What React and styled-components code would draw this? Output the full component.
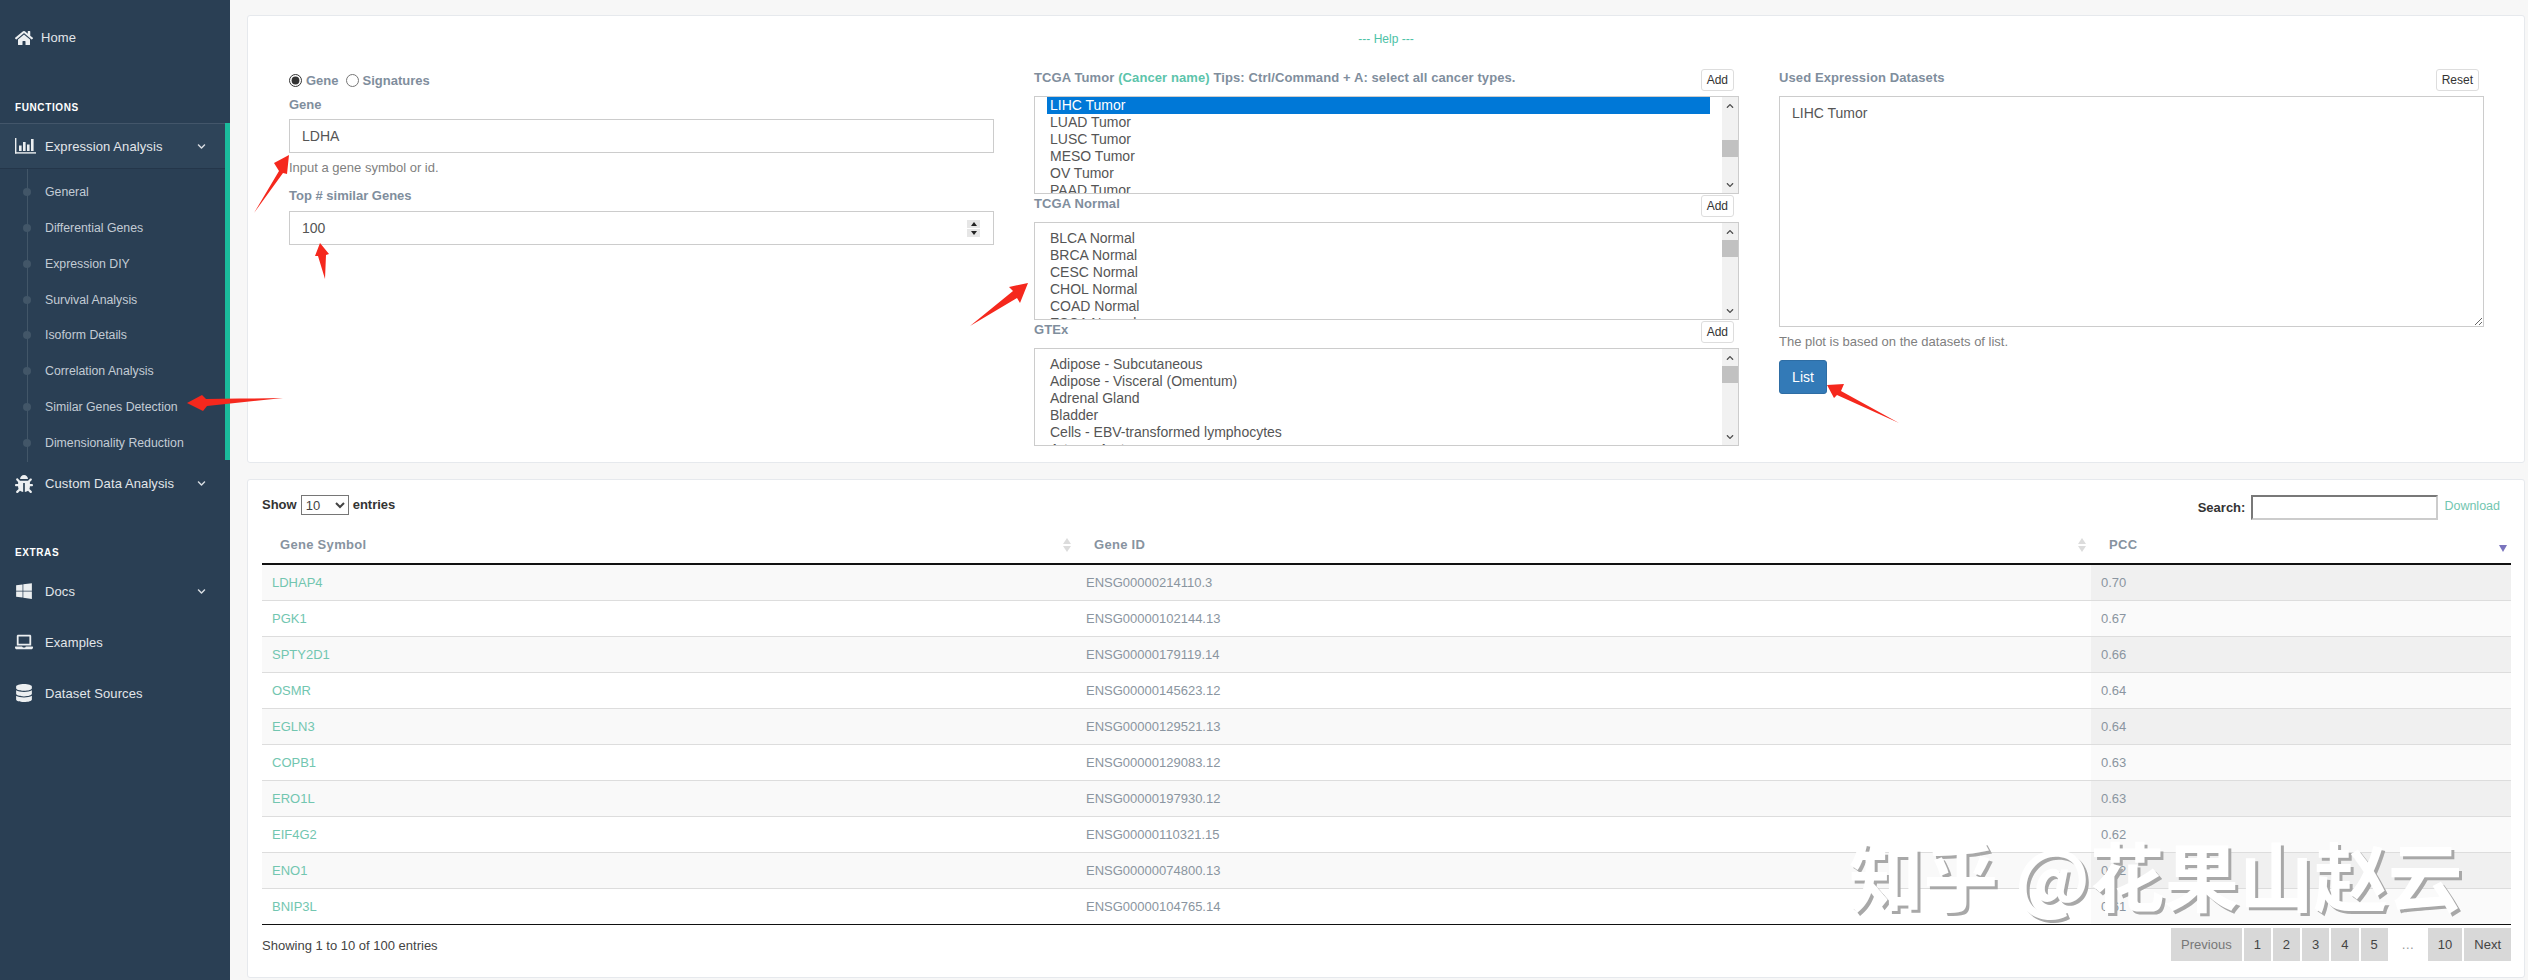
import React from "react";
import styled, { createGlobalStyle } from "styled-components";
import {
  FaHome,
  FaBug,
  FaWindows,
  FaLaptop,
  FaDatabase,
  FaChevronDown,
  FaChevronUp,
} from "react-icons/fa";

const GlobalStyle = createGlobalStyle`
  html, body {
    margin: 0;
    background: #f7f7f7;
    font-family: "Liberation Sans", Arial, sans-serif;
    font-size: 13px;
    color: #7f8e9d;
  }
  * { box-sizing: border-box; }
`;

const Page = styled.div`
  position: relative;
  display: flex;
  width: 2528px;
  height: 980px;
  overflow: hidden;
`;

/* sidebar */
const Sidebar = styled.aside`
  width: 230px;
  flex: none;
  background: #2a3f54;
  padding-top: 15px;
  color: #e7e7e7;
`;

const NavItem = styled.div`
  display: flex;
  align-items: center;
  height: ${(p) => (p.$active ? "46px" : "45px")};
  padding: 0 ${(p) => (p.$active ? "19px" : "24px")} 0 15px;
  font-size: 13px;
  letter-spacing: 0.1px;
  color: #e2e6ea;
  ${(p) =>
    p.$active &&
    `
    background: #2e4459;
    border-top: 1px solid #43566a;
    border-bottom: 1px solid #24364a;
  `}
`;

const NavIcon = styled.span`
  display: flex;
  align-items: center;
  width: ${(p) => (p.$compact ? "26px" : "30px")};
  flex: none;
  font-size: 18px;
  color: #eceff1;
`;

const Caret = styled(FaChevronDown)`
  margin-left: auto;
  font-size: 9px;
  color: #d8dde2;
`;

const SectionTitle = styled.h3`
  margin: ${(p) => p.$top}px 0 ${(p) => p.$bottom}px;
  padding-left: 15px;
  font-size: 10px;
  line-height: 17px;
  font-weight: bold;
  letter-spacing: 0.6px;
  color: #fff;
`;

const ActiveGroup = styled.div`
  height: 337px;
  margin-bottom: 1px;
  border-right: 5px solid #1abb9c;
`;

const SubList = styled.ul`
  position: relative;
  margin: 0;
  padding: 5px 0 0;
  list-style: none;
  &::before {
    content: "";
    position: absolute;
    left: 27px;
    top: 0;
    bottom: -1px;
    width: 1px;
    background: #425668;
  }
`;

const SubItem = styled.li`
  position: relative;
  height: 35.85px;
  line-height: 36px;
  padding-left: 45px;
  font-size: 12.3px;
  color: #c3ccd4;
  &::before {
    content: "";
    position: absolute;
    left: 23px;
    top: 14px;
    width: 8px;
    height: 8px;
    border-radius: 50%;
    background: #425668;
  }
`;

const ExtraList = styled.div`
  display: flex;
  flex-direction: column;
  gap: 6px;
`;

/* main area */
const Main = styled.main`
  flex: 1;
  display: flex;
  flex-direction: column;
  gap: 16px;
  padding: 15px 3px 0 17px;
`;

const Panel = styled.section`
  height: ${(p) => p.$height}px;
  background: #fff;
  border: 1px solid #e6e9ed;
  border-radius: 3px;
`;

const FormPanel = styled(Panel)`
  padding: 15px 0 0 41px;
`;

const HelpLink = styled.div`
  text-align: center;
  line-height: 17px;
  font-size: 12px;
  color: #4dc2a6;
  margin-bottom: 21px;
  padding-right: 41px;
`;

const Columns = styled.div`
  display: grid;
  grid-template-columns: repeat(3, 705px);
  column-gap: 40px;
`;

const Label = styled.label`
  display: block;
  font-weight: bold;
  font-size: 13px;
  line-height: 17px;
  color: #7f8e9d;
  margin-top: ${(p) => p.$top || 0}px;
`;

const Teal = styled.span`
  color: #5cc4ab;
`;

const RadioRow = styled.div`
  display: flex;
  align-items: center;
  height: 22px;
  gap: 4px;
  font-weight: bold;
  color: #7f8e9d;
  input {
    margin: 0;
    width: 13px;
    height: 13px;
    accent-color: #333;
  }
`;

const RadioText = styled.span`
  margin-right: 3px;
`;

const TextField = styled.input`
  display: block;
  width: 705px;
  height: 34px;
  margin-top: 6px;
  padding: 0 12px;
  border: 1px solid #ccc;
  font: 14px "Liberation Sans", Arial, sans-serif;
  color: #555;
  outline: none;
`;

const NumberField = styled.div`
  display: flex;
  align-items: center;
  height: 34px;
  margin-top: 7px;
  padding: 0 13px 0 12px;
  border: 1px solid #ccc;
  font-size: 14px;
  color: #555;
`;

const Spinner = styled.div`
  margin-left: auto;
  display: flex;
  flex-direction: column;
  gap: 1px;
  width: 13px;
`;

const SpinCell = styled.span`
  display: flex;
  justify-content: center;
  align-items: center;
  height: 8px;
  background: #e6e6e6;
  &::after {
    content: "";
    border-left: 3px solid transparent;
    border-right: 3px solid transparent;
    ${(p) => (p.$up ? "border-bottom" : "border-top")}: 4px solid #222;
  }
`;

const HelpText = styled.p`
  margin: ${(p) => p.$top}px 0 0;
  font-size: 13px;
  line-height: 17px;
  color: #808080;
`;

const BlockHead = styled.div`
  display: flex;
  justify-content: space-between;
  align-items: flex-start;
  height: 27px;
  padding-right: 5px;
`;

const BlockTitle = styled.div`
  font-weight: bold;
  line-height: 18px;
  letter-spacing: 0.1px;
  color: #7f8e9d;
`;

const SmallButton = styled.button`
  height: 22px;
  padding: 0 5px;
  background: #fff;
  border: 1px solid #ddd;
  border-radius: 3px;
  font: 12px "Liberation Sans", Arial, sans-serif;
  color: #333;
`;

const ListBox = styled.div`
  display: flex;
  height: 98px;
  margin-bottom: 1px;
  border: 1px solid #ccc;
  overflow: hidden;
`;

const ListOptions = styled.div`
  flex: 1;
  min-width: 0;
  padding: ${(p) => p.$offset}px 12px 0;
`;

const ListOption = styled.div`
  height: 17px;
  line-height: 17px;
  padding-left: 3px;
  font-size: 14px;
  white-space: nowrap;
  color: ${(p) => (p.$selected ? "#fff" : "#555")};
  background: ${(p) => (p.$selected ? "#0078d7" : "transparent")};
`;

const ScrollBar = styled.div`
  display: flex;
  flex-direction: column;
  width: 16px;
  flex: none;
  background: #f1f1f1;
`;

const ScrollArrow = styled.div`
  display: flex;
  align-items: center;
  justify-content: center;
  height: 17px;
  flex: none;
  font-size: 8px;
  color: #505050;
`;

const ScrollTrack = styled.div`
  flex: 1;
  padding-top: ${(p) => p.$thumb}px;
  &::before {
    content: "";
    display: block;
    height: 17px;
    background: #c1c1c1;
  }
`;

const UsedText = styled.textarea`
  display: block;
  width: 705px;
  height: 231px;
  padding: 8px 12px;
  border: 1px solid #ccc;
  font: 14px/17px "Liberation Sans", Arial, sans-serif;
  color: #555;
  outline: none;
`;

const PrimaryButton = styled.button`
  display: block;
  width: 48px;
  height: 34px;
  margin-top: 10px;
  background: #337ab7;
  border: 1px solid #2e6da4;
  border-radius: 3px;
  font: 14px "Liberation Sans", Arial, sans-serif;
  color: #fff;
`;

/* table panel */
const TablePanel = styled(Panel)`
  padding: 15px 13px 0 14px;
`;

const TableTop = styled.div`
  display: flex;
  justify-content: space-between;
  height: 31px;
  padding-right: 11px;
`;

const ShowControl = styled.div`
  display: flex;
  align-items: flex-start;
  gap: 4px;
  font-weight: bold;
  line-height: 20px;
  color: #333;
  select {
    width: 48px;
    height: 20px;
    font: 13px "Liberation Sans", Arial, sans-serif;
    color: #444;
    background: #fff;
    border: 1px solid #767676;
    border-radius: 0;
  }
`;

const SearchControl = styled.div`
  display: flex;
  align-items: center;
  height: 25px;
  font-weight: bold;
  color: #333;
  input {
    width: 187px;
    height: 25px;
    margin: 0 6px;
    border: 2px inset #ccc;
    background: #fff;
  }
`;

const DownloadLink = styled.a`
  font-weight: normal;
  font-size: 12.5px;
  color: #72c6b0;
  margin-top: -4px;
`;

const Table = styled.table`
  width: 2249px;
  table-layout: fixed;
  border-collapse: collapse;
  border-bottom: 1px solid #111;
`;

const HeadRow = styled.tr`
  height: 38px;
  border-bottom: 2px solid #111;
`;

const HeadCell = styled.th`
  padding: 0 5px 0 18px;
  font-size: 13px;
  letter-spacing: 0.3px;
  font-weight: bold;
  text-align: left;
  color: #87939f;
`;

const HeadInner = styled.div`
  display: flex;
  justify-content: space-between;
  align-items: center;
`;

const SortIcon = styled.span`
  display: flex;
  flex-direction: column;
  gap: 2px;
  &::before,
  &::after {
    content: "";
    border-left: 4px solid transparent;
    border-right: 4px solid transparent;
  }
  &::before {
    border-bottom: 6px solid #dcdcdc;
  }
  &::after {
    border-top: 6px solid #dcdcdc;
  }
`;

const SortDesc = styled.span`
  margin-top: 8px;
  margin-right: -1px;
  border-left: 4px solid transparent;
  border-right: 4px solid transparent;
  border-top: 7px solid #7a74bd;
`;

const Row = styled.tr`
  height: 36px;
  background: ${(p) => (p.$odd ? "#f9f9f9" : "#fff")};
  border-bottom: 1px solid #ddd;
  &:last-child {
    border-bottom: none;
  }
`;

const Cell = styled.td`
  padding: 1px 10px 0;
  font-size: 13px;
  color: #8a95a0;
`;

const SortedCell = styled(Cell)`
  background: ${(p) => (p.$odd ? "#f0f0f0" : "#fafafa")};
`;

const GeneLink = styled.a`
  color: #72c6b0;
`;

const TableFoot = styled.div`
  display: flex;
  justify-content: space-between;
  align-items: flex-start;
  padding-top: 3px;
`;

const Showing = styled.div`
  padding-top: 10px;
  color: #444;
`;

const Pagination = styled.div`
  display: flex;
  gap: 2px;
`;

const PageButton = styled.span`
  height: 33px;
  line-height: 33px;
  padding: 0 10px;
  background: #d8d8d8;
  color: ${(p) => (p.$muted ? "#777" : "#444")};
`;

const PageGap = styled.span`
  width: 36px;
  line-height: 33px;
  text-align: center;
  color: #999;
`;

/* overlays added on top of the screenshot */
const Annotations = styled.svg`
  position: absolute;
  left: 0;
  top: 0;
  pointer-events: none;
`;

const Watermark = styled.div`
  position: absolute;
  left: 1849px;
  top: 832px;
  font-family: "Noto Sans CJK SC", sans-serif;
  font-size: 74.5px;
  font-weight: bold;
  line-height: 84px;
  white-space: nowrap;
  color: #fff;
  text-shadow: 3px 3px 0 #a8a8a8;
`;

const BarChartIcon = () => (
  <svg width="21" height="16" viewBox="0 0 21 16" fill="currentColor">
    <rect x="0" y="0" width="1.4" height="15.5" />
    <rect x="0" y="14.2" width="21" height="1.4" />
    <rect x="4" y="7.5" width="2.6" height="5.5" />
    <rect x="8" y="4" width="2.6" height="9" />
    <rect x="12" y="6.5" width="2.6" height="6.5" />
    <rect x="16" y="1" width="2.6" height="12" />
  </svg>
);

const subItems = [
  "General",
  "Differential Genes",
  "Expression DIY",
  "Survival Analysis",
  "Isoform Details",
  "Correlation Analysis",
  "Similar Genes Detection",
  "Dimensionality Reduction",
];

const datasets = [
  {
    title: (
      <>
        TCGA Tumor <Teal>(Cancer name)</Teal> Tips: Ctrl/Command + A: select all cancer types.
      </>
    ),
    offset: 0,
    thumb: 26,
    items: ["LIHC Tumor", "LUAD Tumor", "LUSC Tumor", "MESO Tumor", "OV Tumor", "PAAD Tumor"],
  },
  {
    title: "TCGA Normal",
    offset: 7,
    thumb: 0,
    items: ["BLCA Normal", "BRCA Normal", "CESC Normal", "CHOL Normal", "COAD Normal", "ESCA Normal"],
  },
  {
    title: "GTEx",
    offset: 7,
    thumb: 0,
    items: [
      "Adipose - Subcutaneous",
      "Adipose - Visceral (Omentum)",
      "Adrenal Gland",
      "Bladder",
      "Cells - EBV-transformed lymphocytes",
      "Artery - Aorta",
    ],
  },
];

const rows = [
  ["LDHAP4", "ENSG00000214110.3", "0.70"],
  ["PGK1", "ENSG00000102144.13", "0.67"],
  ["SPTY2D1", "ENSG00000179119.14", "0.66"],
  ["OSMR", "ENSG00000145623.12", "0.64"],
  ["EGLN3", "ENSG00000129521.13", "0.64"],
  ["COPB1", "ENSG00000129083.12", "0.63"],
  ["ERO1L", "ENSG00000197930.12", "0.63"],
  ["EIF4G2", "ENSG00000110321.15", "0.62"],
  ["ENO1", "ENSG00000074800.13", "0.62"],
  ["BNIP3L", "ENSG00000104765.14", "0.61"],
];

const arrows = [
  "254,213 279,171 274,163 289,155 287,174 283,173",
  "283,398 206,399 202,395 187,403 203,411 207,406",
  "325,279 318,256 315,256 320,243 329,254 326,255",
  "970,326 1013,291 1009,287 1028,283 1020,303 1017,298",
  "1899,423 1841,391 1844,384 1827,385 1834,398 1837,395",
];

const App = () => {
  return (
    <Page>
      <GlobalStyle />
      <Sidebar>
        <NavItem>
          <NavIcon $compact><FaHome /></NavIcon>
          Home
        </NavItem>
        <SectionTitle $top={38.5} $bottom={7.5}>FUNCTIONS</SectionTitle>
        <ActiveGroup>
          <NavItem $active>
            <NavIcon><BarChartIcon /></NavIcon>
            Expression Analysis
            <Caret />
          </NavItem>
          <SubList>
            {subItems.map((name) => (
              <SubItem key={name}>{name}</SubItem>
            ))}
          </SubList>
        </ActiveGroup>
        <NavItem>
          <NavIcon><FaBug /></NavIcon>
          Custom Data Analysis
          <Caret />
        </NavItem>
        <SectionTitle $top={37.5} $bottom={8}>EXTRAS</SectionTitle>
        <ExtraList>
          <NavItem>
            <NavIcon><FaWindows /></NavIcon>
            Docs
            <Caret />
          </NavItem>
          <NavItem>
            <NavIcon><FaLaptop /></NavIcon>
            Examples
          </NavItem>
          <NavItem>
            <NavIcon><FaDatabase /></NavIcon>
            Dataset Sources
          </NavItem>
        </ExtraList>
      </Sidebar>

      <Main>
        <FormPanel $height={448}>
          <HelpLink>--- Help ---</HelpLink>
          <Columns>
            <div>
              <RadioRow>
                <input type="radio" name="mode" defaultChecked />
                <RadioText>Gene</RadioText>
                <input type="radio" name="mode" />
                <RadioText>Signatures</RadioText>
              </RadioRow>
              <Label $top={5}>Gene</Label>
              <TextField defaultValue="LDHA" />
              <HelpText $top={6}>Input a gene symbol or id.</HelpText>
              <Label $top={11}>Top # similar Genes</Label>
              <NumberField>
                100
                <Spinner>
                  <SpinCell $up />
                  <SpinCell />
                </Spinner>
              </NumberField>
            </div>

            <div>
              {datasets.map((set, i) => (
                <div key={i}>
                  <BlockHead>
                    <BlockTitle>{set.title}</BlockTitle>
                    <SmallButton>Add</SmallButton>
                  </BlockHead>
                  <ListBox>
                    <ListOptions $offset={set.offset}>
                      {set.items.map((item) => (
                        <ListOption key={item} $selected={item === "LIHC Tumor"}>{item}</ListOption>
                      ))}
                    </ListOptions>
                    <ScrollBar>
                      <ScrollArrow><FaChevronUp /></ScrollArrow>
                      <ScrollTrack $thumb={set.thumb} />
                      <ScrollArrow><FaChevronDown /></ScrollArrow>
                    </ScrollBar>
                  </ListBox>
                </div>
              ))}
            </div>

            <div>
              <BlockHead>
                <BlockTitle>Used Expression Datasets</BlockTitle>
                <SmallButton>Reset</SmallButton>
              </BlockHead>
              <UsedText defaultValue="LIHC Tumor" />
              <HelpText $top={6}>The plot is based on the datasets of list.</HelpText>
              <PrimaryButton>List</PrimaryButton>
            </div>
          </Columns>
        </FormPanel>

        <TablePanel $height={499}>
          <TableTop>
            <ShowControl>
              Show
              <select defaultValue="10">
                <option value="10">10</option>
                <option value="25">25</option>
              </select>
              entries
            </ShowControl>
            <SearchControl>
              Search:
              <input type="search" />
              <DownloadLink>Download</DownloadLink>
            </SearchControl>
          </TableTop>
          <Table>
            <colgroup>
              <col style={{ width: 814 }} />
              <col style={{ width: 1015 }} />
              <col style={{ width: 420 }} />
            </colgroup>
            <thead>
              <HeadRow>
                <HeadCell>
                  <HeadInner>Gene Symbol<SortIcon /></HeadInner>
                </HeadCell>
                <HeadCell>
                  <HeadInner>Gene ID<SortIcon /></HeadInner>
                </HeadCell>
                <HeadCell>
                  <HeadInner>PCC<SortDesc /></HeadInner>
                </HeadCell>
              </HeadRow>
            </thead>
            <tbody>
              {rows.map((row, i) => (
                <Row key={row[0]} $odd={i % 2 === 0}>
                  <Cell><GeneLink>{row[0]}</GeneLink></Cell>
                  <Cell>{row[1]}</Cell>
                  <SortedCell $odd={i % 2 === 0}>{row[2]}</SortedCell>
                </Row>
              ))}
            </tbody>
          </Table>
          <TableFoot>
            <Showing>Showing 1 to 10 of 100 entries</Showing>
            <Pagination>
              <PageButton $muted>Previous</PageButton>
              <PageButton>1</PageButton>
              <PageButton>2</PageButton>
              <PageButton>3</PageButton>
              <PageButton>4</PageButton>
              <PageButton>5</PageButton>
              <PageGap>…</PageGap>
              <PageButton>10</PageButton>
              <PageButton>Next</PageButton>
            </Pagination>
          </TableFoot>
        </TablePanel>
      </Main>

      <Watermark>知乎 @花果山赵云</Watermark>
      <Annotations width="2528" height="980">
        {arrows.map((points) => (
          <polygon key={points} points={points} fill="#f5281d" />
        ))}
      </Annotations>
    </Page>
  );
};

export default App;
